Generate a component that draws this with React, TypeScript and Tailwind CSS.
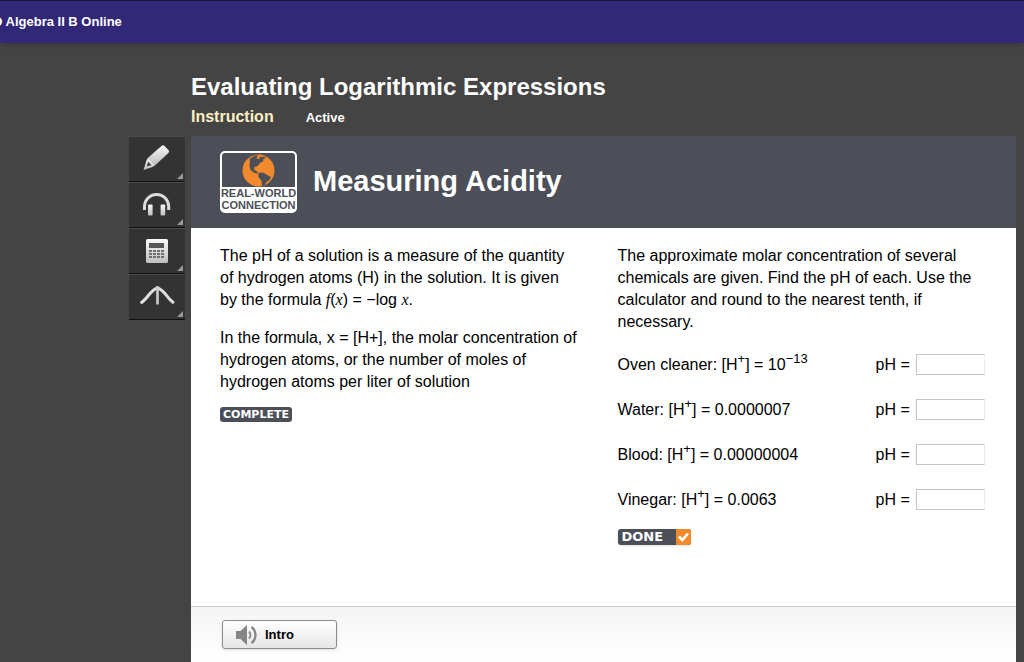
import React from 'react'

const tools = [
  { name: 'Highlighter', icon: <PencilIcon /> },
  { name: 'Audio', icon: <HeadphonesIcon /> },
  { name: 'Calculator', icon: <CalculatorIcon /> },
  { name: 'Graphing', icon: <GraphIcon /> },
]

const samples = [
  { id: 'oven', label: 'Oven cleaner', value: '10', exponent: '−13' },
  { id: 'water', label: 'Water', value: '0.0000007' },
  { id: 'blood', label: 'Blood', value: '0.00000004' },
  { id: 'vinegar', label: 'Vinegar', value: '0.0063' },
]

function IconGradient({ id }: { id: string }) {
  return (
    <defs>
      <linearGradient id={id} x1="0" y1="0" x2="0" y2="1">
        <stop offset="0" stopColor="#fafafa" />
        <stop offset="1" stopColor="#bdbdbd" />
      </linearGradient>
    </defs>
  )
}

function PencilIcon() {
  return (
    <svg width="36" height="32" viewBox="0 0 36 32" aria-hidden="true">
      <IconGradient id="pencil" />
      <path d="M22.5 3Q24 1.5 25.5 3L29.4 7Q31 8.5 29.4 10L16.5 22L9 14.8Z" fill="url(#pencil)" />
      <path d="M9 14.8L16.5 22L13.5 24L4.5 27L7.5 17.5Z" fill="url(#pencil)" />
      <path d="M9.2 18.6L12.6 22.2L7.8 23.6Z" fill="#444444" />
    </svg>
  )
}

function HeadphonesIcon() {
  return (
    <svg width="36" height="32" viewBox="0 0 36 32" aria-hidden="true">
      <IconGradient id="phones" />
      <path d="M5.5 21V17.5a12 12 0 0 1 24.2 0V21" fill="none" stroke="#dcdcdc" strokeWidth="3" />
      <rect x="9" y="15.5" width="4.6" height="11" rx="1" fill="url(#phones)" />
      <rect x="21.6" y="15.5" width="4.6" height="11" rx="1" fill="url(#phones)" />
    </svg>
  )
}

function CalculatorIcon() {
  return (
    <svg width="36" height="32" viewBox="0 0 36 32" aria-hidden="true">
      <IconGradient id="calc" />
      <rect x="7" y="4" width="22" height="24" rx="1.5" fill="url(#calc)" />
      <rect x="10" y="8" width="15" height="5" fill="#555555" />
      {[15, 18, 21].map((y) =>
        [10, 14, 18, 22].map((x) => <rect key={`${x}-${y}`} x={x} y={y} width="3" height="2" fill="#707070" />)
      )}
    </svg>
  )
}

function GraphIcon() {
  return (
    <svg width="36" height="32" viewBox="0 0 36 32" aria-hidden="true">
      <path d="M1.5 22C8 19 11 9 18.5 7C26 9 28 18 35 22" fill="none" stroke="#dedede" strokeWidth="3" />
      <path d="M18.5 5v18.5" stroke="#cccccc" strokeWidth="2.6" />
    </svg>
  )
}

function GlobeIcon() {
  return (
    <svg width="33" height="33" viewBox="0 0 33 33" aria-hidden="true">
      <circle cx="16.5" cy="16.5" r="16" fill="#f08a2c" />
      <path
        d="M8 4.5L13 1.5L16 1.2L14.5 4L16.5 5.5L18.5 2.5L21.5 4L21 7.5L18.5 8.5L15.5 12L12.5 13L12 15.5L15 17.5L16.5 19.5L12.5 19L8.5 16L7.5 12Z"
        fill="#4d4f58"
      />
      <path d="M16.5 19L21 18.5L25 21L29 23L27.5 26L24.5 28L22.5 31.3L20 32L19.5 27L16.5 23Z" fill="#4d4f58" />
      <path d="M20 2.5L23.5 3L22.5 5L20.5 4.5Z" fill="#4d4f58" />
    </svg>
  )
}

function SpeakerIcon() {
  return (
    <svg width="22" height="22" viewBox="0 0 22 22" aria-hidden="true">
      <path d="M1 7h4.5L12 1v20l-6.5-6H1z" fill="#858585" />
      <path d="M14 7.5a5 5 0 0 1 0 7" fill="none" stroke="#858585" strokeWidth="2" />
      <path d="M16.5 3a10 10 0 0 1 0 16" fill="none" stroke="#858585" strokeWidth="2.4" />
    </svg>
  )
}

function ToolRail() {
  return (
    <nav className="mr-1.5 w-14 shrink-0" aria-label="Tools">
      {tools.map((tool) => (
        <button
          key={tool.name}
          aria-label={tool.name}
          className="relative flex h-[46px] w-full items-center justify-center border-t border-b border-t-[#4b4b4b] border-b-[#111111] bg-[#333333]"
        >
          {tool.icon}
          <svg className="absolute right-0.5 bottom-0.5" width="6" height="6" viewBox="0 0 6 6" aria-hidden="true">
            <path d="M6 0V6H0Z" fill="#999999" />
          </svg>
        </button>
      ))}
    </nav>
  )
}

function RealWorldBadge() {
  return (
    <div className="flex h-[62px] w-[77px] flex-col rounded-[5px] border-2 border-white">
      <div className="flex flex-1 items-center justify-center">
        <GlobeIcon />
      </div>
      <div className="flex flex-col items-center bg-white text-[11px] leading-3 font-bold whitespace-nowrap text-[#4d4f58]">
        <span>REAL-WORLD</span>
        <span>CONNECTION</span>
      </div>
    </div>
  )
}

function Question() {
  return (
    <form onSubmit={(e) => e.preventDefault()}>
      <p>
        The approximate molar concentration of several chemicals are given. Find the pH of each. Use the calculator and
        round to the nearest tenth, if necessary.
      </p>
      <div className="mt-[9px]">
        {samples.map((sample) => (
          <div key={sample.id} className="flex h-[45px] items-center">
            <span className="w-[258px]">
              {sample.label}: [H<sup className="text-[13px]">+</sup>] = {sample.value}
              {sample.exponent && <sup className="text-[13px]">{sample.exponent}</sup>}
            </span>
            <label htmlFor={sample.id}>pH =</label>
            <input
              id={sample.id}
              type="text"
              className="ml-1.5 h-[21px] w-[69px] border border-[#c4c4c4] border-r-[#ededed] bg-white px-1 text-sm"
            />
          </div>
        ))}
      </div>
      <button className="mt-[7px] flex h-4 items-stretch overflow-hidden rounded-[3px] bg-[#4d4f58] font-['DejaVu_Sans',sans-serif] text-[13px] leading-4 font-bold text-white shadow-sm">
        <span className="w-[58px] pl-1 text-left">DONE</span>
        <span className="flex w-[15px] items-center justify-center bg-[#f08a2c]">
          <svg width="11" height="10" viewBox="0 0 11 10" aria-hidden="true">
            <path d="M1 4.5L4.3 8L10 1.5" fill="none" stroke="#ffffff" strokeWidth="2.6" />
          </svg>
        </span>
      </button>
    </form>
  )
}

export default function App() {
  return (
    <div className="flex min-h-screen flex-col bg-[#444444] font-['Liberation_Sans',Arial,sans-serif]">
      <header className="flex h-[43px] items-center overflow-hidden border-t border-[#1a1638] bg-[#322878] text-[13px] font-bold whitespace-nowrap text-white shadow-md">
        <span className="-ml-[7px]">D Algebra II B Online</span>
      </header>

      <div className="pt-7 pl-[191px]">
        <h1 className="text-[24px] leading-8 font-bold text-white">Evaluating Logarithmic Expressions</h1>
        <div className="flex items-baseline gap-8 pt-0.5 pb-1.5 leading-6 font-bold">
          <span className="text-base text-[#fdf0c4]">Instruction</span>
          <span className="text-[13px] text-white">Active</span>
        </div>
      </div>

      <div className="flex flex-1 pr-2 pl-[129px]">
        <ToolRail />
        <main className="flex min-w-0 flex-1 flex-col bg-white">
          <div className="flex h-[92px] items-center gap-4 bg-[#4d4f58] pl-[29px]">
            <RealWorldBadge />
            <h2 className="text-[29px] font-bold text-white">Measuring Acidity</h2>
          </div>

          <div className="grid flex-1 grid-cols-2 gap-7 px-[29px] pt-[17px] text-base leading-[22px] text-black">
            <div className="pr-2.5">
              <p>
                The pH of a solution is a measure of the quantity of hydrogen atoms (H) in the solution. It is given by the
                formula <i className="font-['Liberation_Serif',serif]">f</i>(<i className="font-['Liberation_Serif',serif]">x</i>) = −log{' '}
                <i className="font-['Liberation_Serif',serif]">x</i>.
              </p>
              <p className="mt-4">
                In the formula, x = [H+], the molar concentration of hydrogen atoms, or the number of moles of hydrogen
                atoms per liter of solution
              </p>
              <button className="mt-3.5 h-[15px] rounded-[3px] bg-[#4d4f58] px-[3px] font-['DejaVu_Sans',sans-serif] text-[11px] leading-[15px] font-bold text-white">
                COMPLETE
              </button>
            </div>
            <Question />
          </div>

          <footer className="h-14 border-t border-[#cccccc] bg-linear-to-b from-[#f5f5f5] to-white pt-[13px] pl-[31px]">
            <button className="flex h-[29px] w-[115px] items-center gap-2 rounded-[3px] border border-[#8c8c8c] bg-linear-to-b from-white to-[#e6e6e6] pl-3 text-[13px] font-bold text-black shadow-sm">
              <SpeakerIcon />
              <span>Intro</span>
            </button>
          </footer>
        </main>
      </div>
    </div>
  )
}
